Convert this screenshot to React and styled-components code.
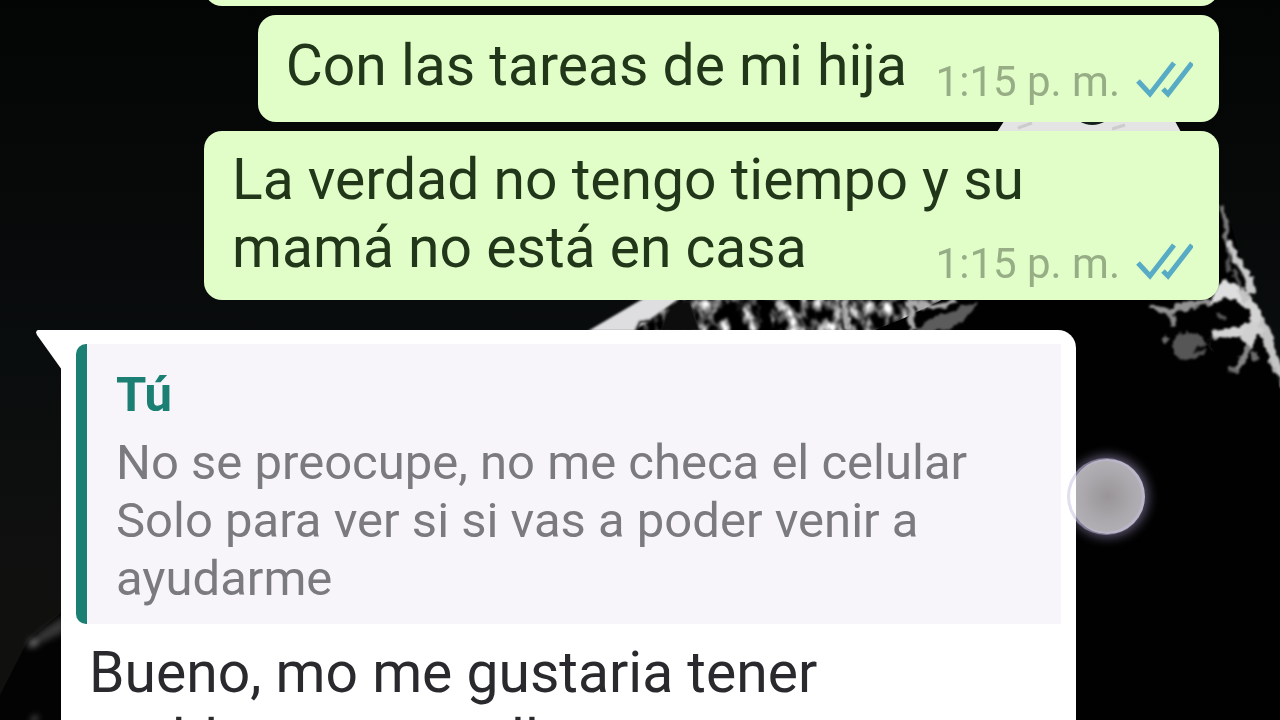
import React from 'react'
import styled, { createGlobalStyle } from 'styled-components';

const GlobalStyle = createGlobalStyle`
  *{
    box-sizing: border-box;
  }
  body{
    margin: 0;
    background-color: #060808;
    font-family: Roboto, 'Liberation Sans', sans-serif;
  }
`
const Screen = styled.div`
  position: relative;
  height: 100vh;
  overflow: hidden;
`
const WallpaperSvg = styled.svg`
  position: absolute;
  inset: 0;
  width: 100%;
  height: 100%;
`
const Chat = styled.main`
  position: relative;
  display: flex;
  flex-direction: column;
  padding: 0 61px;
`
const Bubble = styled.article`
  display: grid;
  align-self: flex-end;
  width: ${({ $wide }) => ($wide ? '100%' : 'auto')};
  max-width: 1015px;
  padding: ${({ $wide }) => ($wide ? '15px 26px 14px 28px' : '17px 26px 18px 28px')};
  margin-bottom: 9px;
  border-radius: 18px;
  background-color: #e1fdc8;
`
const CutBubble = styled(Bubble)`
  max-width: 1015px;
  height: 60px;
  margin-top: -54px;
`
const Text = styled.p`
  grid-area: 1 / 1;
  margin: 0;
  padding-right: ${({ $room }) => ($room ? '286px' : '0')};
  padding-bottom: 4px;
  font-size: 57px;
  line-height: 68px;
  color: ${({ $dark }) => ($dark ? '#2a292d' : '#22361a')};
  white-space: nowrap;
`
const Meta = styled.div`
  grid-area: 1 / 1;
  align-self: end;
  justify-self: end;
  display: flex;
  align-items: flex-start;
  gap: 16px;
  font-size: 42px;
  line-height: 44px;
  color: #97ad86;
`
const Received = styled.article`
  position: relative;
  align-self: flex-start;
  width: 100%;
  max-width: 1015px;
  margin-top: 21px;
  padding: 14px 15px 40px;
  border-radius: 0 18px 18px 18px;
  background-color: #fff;
`
const Tail = styled.svg`
  position: absolute;
  top: 0;
  left: -25px;
  width: 26px;
  height: 40px;
`
const Quote = styled.blockquote`
  margin: 0 0 15px;
  padding: 20px 29px 16px;
  border-left: 11px solid #1b8073;
  border-radius: 10px 0 0 10px;
  background-color: #f7f5f9;
`
const QuoteName = styled.h2`
  margin: 0 0 8px;
  font-size: 49px;
  font-weight: 700;
  line-height: 62px;
  color: #1b8073;
`
const QuoteText = styled.p`
  margin: 0;
  font-size: 49px;
  line-height: 58px;
  color: #7b7a7e;
  white-space: nowrap;
`
const Reply = styled.div`
  padding-left: 13px;
`
const TouchDot = styled.span`
  position: absolute;
  top: 459px;
  left: 1070px;
  width: 75px;
  height: 75px;
  border-radius: 50%;
  background: radial-gradient(circle, #999597 0%, #aaa8ac 45%, #bcbac0 100%);
  box-shadow: 0 0 12px 3px rgba(165, 155, 200, 0.6);
  mix-blend-mode: lighten;
`
const TouchRing = styled.span`
  position: absolute;
  top: 458px;
  left: 1067px;
  width: 78px;
  height: 77px;
  border-radius: 50%;
  border: 3px solid rgba(196, 190, 222, 0.5);
`

function Checks() {
  return (
    <svg width="57" height="38" viewBox="0 0 57 38" fill="none" role="img" aria-label="Leído">
      <path d="M2 21 L14 34 L38 3 M27 29 L32 34 L56 3" stroke="#58abc4" strokeWidth="5" />
    </svg>
  )
}

function Time() {
  return (
    <Meta>
      <time>1:15 p. m.</time>
      <Checks />
    </Meta>
  )
}

function Wallpaper() {
  return (
    <WallpaperSvg viewBox="0 0 1280 720" preserveAspectRatio="xMidYMid slice" aria-hidden="true">
      <defs>
        <linearGradient id="sky" x1="0" y1="0" x2="0" y2="1">
          <stop offset="0" stopColor="#030504" />
          <stop offset="0.5" stopColor="#0a0d0d" />
          <stop offset="0.85" stopColor="#10110f" />
        </linearGradient>
        <filter id="rock" x="0" y="0" width="1" height="1" colorInterpolationFilters="sRGB">
          <feTurbulence type="fractalNoise" baseFrequency="0.07 0.05" numOctaves="3" seed="21" />
          <feColorMatrix values="3.2 0 0 0 -1.4  3.2 0 0 0 -1.4  3.2 0 0 0 -1.4  0 0 0 0 1" />
          <feGaussianBlur stdDeviation="1" />
          <feComposite in2="SourceGraphic" operator="in" />
        </filter>
        <filter id="rough" x="-0.1" y="-0.1" width="1.2" height="1.2">
          <feTurbulence type="fractalNoise" baseFrequency="0.12" numOctaves="2" seed="3" />
          <feDisplacementMap in="SourceGraphic" scale="9" xChannelSelector="R" yChannelSelector="G" />
          <feGaussianBlur stdDeviation="1" />
        </filter>
        <filter id="soft">
          <feGaussianBlur stdDeviation="1.2" />
        </filter>
        <filter id="softer">
          <feGaussianBlur stdDeviation="3" />
        </filter>
      </defs>
      <rect width="1280" height="720" fill="url(#sky)" />
      <path d="M590 330 L650 298 L1215 200 L1228 215 L1280 390 V720 H590 Z" fill="#010101" />
      <path d="M0 695 L28 640 L62 612 V720 H0 Z" fill="#030303" />

      <path d="M997 132 L1010 112 H1170 L1181 132 Z" fill="#e4e4e4" />
      <path d="M1079 121 H1106 Q1092 129 1079 121 Z" fill="#16201a" />
      <path d="M1018 128 L1032 123 M1112 129 L1125 125" stroke="#ccc" strokeWidth="3" />

      <path d="M632 332 L668 298 H946 L900 320 L870 332 Z" filter="url(#rock)" />
      <g filter="url(#soft)">
        <path d="M588 331 L646 297 H682 L660 312 L634 331 Z" fill="#dedee0" />
        <path d="M676 303 L690 301 L700 331 H660 L666 314 Z" fill="#101010" />
        <path d="M636 330 L640 322 L652 320" stroke="#333" strokeWidth="3" fill="none" />
      </g>
      <g filter="url(#rough)">
        <path d="M908 300 L928 308 L956 302 M910 303 L912 331 M845 300 L848 331" stroke="#aaa" strokeWidth="5" fill="none" />
        <path d="M912 332 L940 314 L978 302 L964 320 L940 332 Z" fill="#5c5c5c" />
      </g>

      <g filter="url(#rough)" fill="none">
        <path d="M1220 205 L1226 225 L1227 242" stroke="#777" strokeWidth="5" />
        <path d="M1228 242 L1238 262 L1249 280 L1252 294" stroke="#c8c8c8" strokeWidth="7" />
        <path d="M1208 306 L1222 278 L1240 286 L1254 304 L1262 324 L1250 312 L1240 301 L1224 298 Z" fill="#dedede" />
        <path d="M1240 288 L1254 310 L1266 334 L1274 358 L1286 388" stroke="#c4c4c4" strokeWidth="9" />
        <path d="M1248 300 L1257 316 L1250 329 L1214 335" stroke="#d4d4d4" strokeWidth="10" />
        <path d="M1252 318 L1266 332 L1256 336 L1249 354 L1241 338 Z" fill="#d0d0d0" />
        <path d="M1249 347 L1242 360 L1234 372" stroke="#858585" strokeWidth="6" />
        <path d="M1150 306 L1170 312 L1189 305 L1210 302" stroke="#929292" strokeWidth="6" />
        <path d="M1170 312 L1174 328" stroke="#888" strokeWidth="7" />
        <path d="M1254 350 L1257 360 M1228 368 L1238 372 M1162 336 L1168 342" stroke="#6a6a6a" strokeWidth="5" />
        <path d="M1234 272 L1242 290 M1217 313 L1226 319 M1228 248 L1229 272" stroke="#555" strokeWidth="4" />
        <path d="M1174 336 Q1188 329 1203 338 Q1209 350 1199 357 Q1182 364 1174 354 Z" fill="#575757" />
        <path d="M1194 352 L1209 343 L1214 354" stroke="#080808" strokeWidth="4" />
      </g>

      <g filter="url(#softer)">
        <path d="M26 649 L40 632 L64 616 V632 L47 640 Z" fill="#383838" />
        <circle cx="33" cy="643" r="4" fill="#777" />
        <path d="M32 722 L37 716" stroke="#555" strokeWidth="5" />
      </g>
    </WallpaperSvg>
  )
}

function App() {
  return (
    <Screen>
      <GlobalStyle />
      <Wallpaper />
      <Chat>
        <CutBubble $wide />
        <Bubble>
          <Text $room>Con las tareas de mi hija</Text>
          <Time />
        </Bubble>
        <Bubble $wide>
          <Text>
            La verdad no tengo tiempo y su<br />
            mamá no está en casa
          </Text>
          <Time />
        </Bubble>
        <Received>
          <Tail viewBox="0 0 26 40" aria-hidden="true">
            <path d="M26 0 H2 Q-1 1 1 5 L26 40 Z" fill="#fff" />
          </Tail>
          <Quote>
            <QuoteName>Tú</QuoteName>
            <QuoteText>
              No se preocupe, no me checa el celular<br />
              Solo para ver si si vas a poder venir a<br />
              ayudarme
            </QuoteText>
          </Quote>
          <Reply>
            <Text $dark>
              Bueno, mo me gustaria tener<br />
              problemas con ella
            </Text>
          </Reply>
        </Received>
      </Chat>
      <TouchDot />
      <TouchRing />
    </Screen>
  )
}

export default App
